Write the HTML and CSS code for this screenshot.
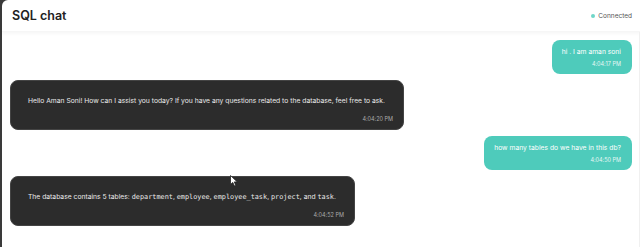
FILE: index.html
```html
<!DOCTYPE html>
<html>
<head>
<meta charset="utf-8">
<link rel="stylesheet" href="styles.css">
</head>
<body>
<div class="app">
  <header class="header">
    <h1 class="title">SQL chat</h1>
    <div class="status"><span class="dot"></span><span>Connected</span></div>
  </header>
  <main class="messages">
    <div class="msg user">
      <div class="text">hi . I am aman soni</div>
      <div class="time">4:04:17 PM</div>
    </div>
    <div class="msg bot">
      <div class="text">Hello Aman Soni! How can I assist you today? If you have any questions related to the database, feel free to ask.</div>
      <div class="time">4:04:20 PM</div>
    </div>
    <div class="msg user">
      <div class="text">how many tables do we have in this db?</div>
      <div class="time">4:04:50 PM</div>
    </div>
    <div class="msg bot">
      <div class="text">The database contains 5 tables: <code>department</code>, <code>employee</code>, <code>employee_task</code>, <code>project</code>, and <code>task</code>.</div>
      <div class="time">4:04:52 PM</div>
      <svg class="cursor" width="8" height="12" viewBox="0 0 8 12"><path d="M0.5 0.5 L0.5 9.5 L2.8 7.4 L4.4 11 L5.8 10.4 L4.3 6.9 L7.3 6.9 Z" fill="#fff" stroke="#222" stroke-width="0.8"/></svg>
    </div>
  </main>
</div>
</body>
</html>
```

FILE: styles.css
```css
html, body {
  margin: 0;
  padding: 0;
  height: 100%;
}
body {
  background: #3a3a3a;
  font-family: Inter, "Noto Sans", sans-serif;
  overflow: hidden;
}
.app {
  margin-left: 2px;
  height: 100%;
  background: #fff;
  border-top-left-radius: 6px;
  display: flex;
  flex-direction: column;
}
.header {
  height: 31px;
  flex: none;
  display: flex;
  align-items: center;
  justify-content: space-between;
  padding: 0 8px 0 10px;
  box-shadow: 0 2px 3px rgba(0,0,0,0.035);
  border-bottom: 1px solid #f6f6f6;
}
.title {
  margin: 0;
  font-size: 12.5px;
  font-weight: 600;
  color: #222;
}
.status {
  display: flex;
  align-items: center;
  gap: 3px;
  font-size: 6.5px;
  color: #555;
}
.dot {
  width: 4px;
  height: 4px;
  border-radius: 50%;
  background: #6fd6c8;
}
.messages {
  flex: 1;
  display: flex;
  flex-direction: column;
  gap: 6px;
  padding: 8px 7px 0 8px;
  border-right: 1px solid #f0f0f0;
}
.msg {
  border-radius: 8px;
  font-size: 6.75px;
  line-height: 10px;
  position: relative;
}
.msg .time {
  font-size: 5.5px;
  line-height: 8px;
  text-align: right;
}
.user {
  align-self: flex-end;
  background: #4ecbbb;
  color: #fff;
  padding: 7px 11px 6px 10px;
}
.user .time {
  margin-top: 3px;
  color: #e6f7f4;
}
.bot {
  align-self: flex-start;
  background: #2c2c2c;
  color: #eaeaea;
  padding: 15px 10px 6px 17px;
  border: 1px solid #444;
}
.bot .text {
  padding-right: 8px;
}
.bot .time {
  margin-top: 9px;
  color: #aaa;
}
code {
  font-family: "DejaVu Sans Mono", monospace;
  font-size: 6.85px;
}
.cursor {
  position: absolute;
  left: 219px;
  top: -2px;
}
```
